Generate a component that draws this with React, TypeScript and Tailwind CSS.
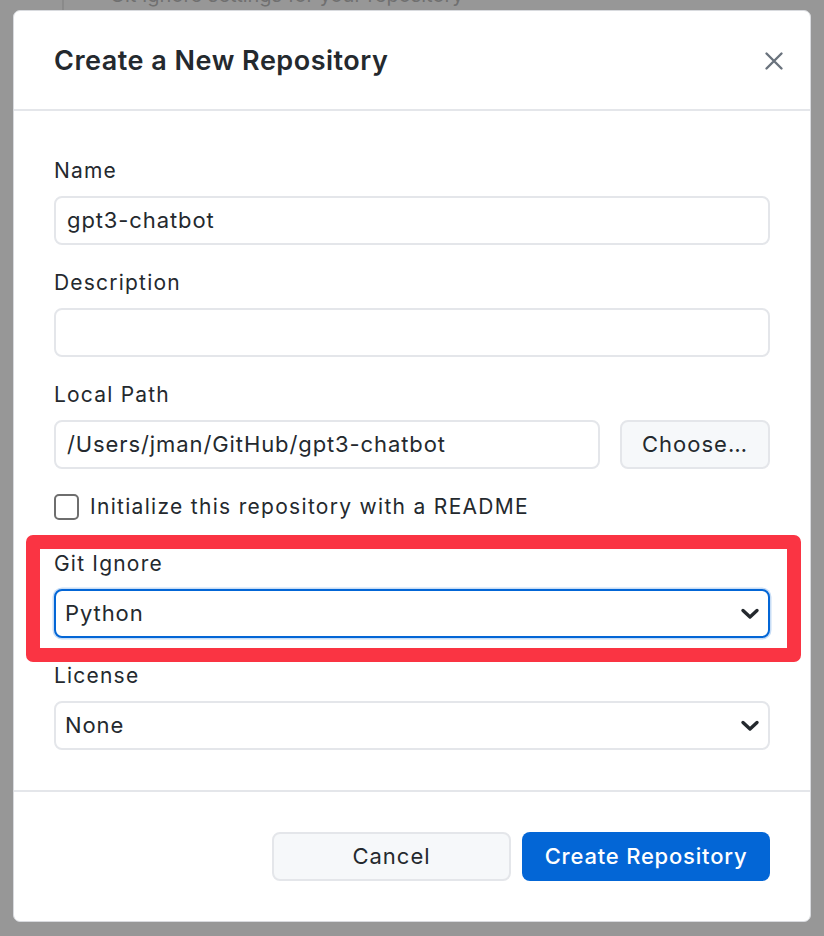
import type { ReactNode } from 'react'

function Label({ children }: { children: ReactNode }) {
    return <div className="text-[21px] leading-[24px] tracking-[1.2px] text-[#24292e]">{children}</div>
}

function Field({ value, className = '' }: { value?: string; className?: string }) {
    return (
        <div className={`h-[49px] rounded-[8px] border-2 border-[#e4e6ea] bg-white px-[11px] flex items-center text-[22px] tracking-[0.9px] text-[#24292e] ${className}`}>
            {value}
        </div>
    )
}

function Chevron() {
    return (
        <svg width="20" height="14" viewBox="0 0 20 14" fill="none">
            <path d="M3 3.5 L10 10 L17 3.5" stroke="#24292e" strokeWidth="3.4" strokeLinecap="round" strokeLinejoin="round" />
        </svg>
    )
}

function Select({ value, focused }: { value: string; focused?: boolean }) {
    return (
        <div
            className={`h-[49px] rounded-[8px] border-2 bg-white pl-[9px] pr-[8px] flex items-center justify-between text-[22px] tracking-[0.9px] text-[#24292e] ${
                focused ? 'border-[#0366d6] shadow-[0_0_0_1.5px_rgba(3,102,214,0.22)]' : 'border-[#e4e6ea]'
            }`}
        >
            <span>{value}</span>
            <Chevron />
        </div>
    )
}

export default function App() {
    return (
        <div className="relative min-h-[936px] overflow-hidden bg-[#979797] font-['Inter',sans-serif]">
            {/* dimmed window behind the dialog */}
            <div className="absolute left-[62px] top-0 h-[10px] w-[2px] bg-[#8a8a8a]" />
            <div className="absolute left-[110px] top-[-20px] text-[20px] text-[#707070]">Git Ignore settings for your repository</div>

            <div className="pt-[10px] pl-[13px]">
                <div className="w-[798px] h-[912px] bg-white rounded-[7px] border border-[#d8dade] flex flex-col">
                    <div className="h-[100px] shrink-0 border-b-2 border-[#e4e6ea] pl-[40px] pr-[25px] pt-[2px] flex items-center justify-between">
                        <h1 className="text-[27px] font-semibold text-[#24292e] tracking-[0.5px]">Create a New Repository</h1>
                        <svg width="22" height="22" viewBox="0 0 22 22" fill="none">
                            <path d="M3.5 3.5 L18.5 18.5 M18.5 3.5 L3.5 18.5" stroke="#6a737d" strokeWidth="2.4" strokeLinecap="round" />
                        </svg>
                    </div>

                    <div className="flex-1 px-[40px] pt-[48px]">
                        <Label>Name</Label>
                        <Field value="gpt3-chatbot" className="mt-[13px]" />

                        <div className="mt-[26px]"><Label>Description</Label></div>
                        <Field className="mt-[13px]" />

                        <div className="mt-[26px]"><Label>Local Path</Label></div>
                        <div className="mt-[13px] flex gap-[20px]">
                            <Field value="/Users/jman/GitHub/gpt3-chatbot" className="flex-1" />
                            <button className="w-[150px] h-[49px] rounded-[8px] border-2 border-[#e4e6ea] bg-[#f6f8fa] text-[22px] tracking-[1px] text-[#24292e]">
                                Choose…
                            </button>
                        </div>

                        <div className="mt-[25px] flex items-center gap-[11px] h-[26px]">
                            <div className="w-[25px] h-[26px] rounded-[5px] border-2 border-[#6e6e6e] bg-white" />
                            <span className="text-[21px] tracking-[1.3px] text-[#24292e]">Initialize this repository with a README</span>
                        </div>

                        <div className="mt-[32px]"><Label>Git Ignore</Label></div>
                        <div className="mt-[13px]"><Select value="Python" focused /></div>

                        <div className="mt-[26px]"><Label>License</Label></div>
                        <div className="mt-[13px]"><Select value="None" /></div>
                    </div>

                    <div className="h-[131px] shrink-0 border-t-2 border-[#e4e6ea] px-[40px] flex items-center justify-end gap-[11px]">
                        <button className="w-[239px] h-[49px] rounded-[8px] border-2 border-[#e4e6ea] bg-[#f6f8fa] text-[22px] tracking-[1px] text-[#24292e]">
                            Cancel
                        </button>
                        <button className="w-[248px] h-[49px] rounded-[8px] bg-[#0366d6] text-[22px] font-medium tracking-[0.8px] text-white">
                            Create Repository
                        </button>
                    </div>
                </div>
            </div>

            {/* highlight annotation */}
            <div className="absolute left-[26px] top-[535px] w-[775px] h-[127px] rounded-[7px] border-[14px] border-[#fa3443]" />
        </div>
    )
}
